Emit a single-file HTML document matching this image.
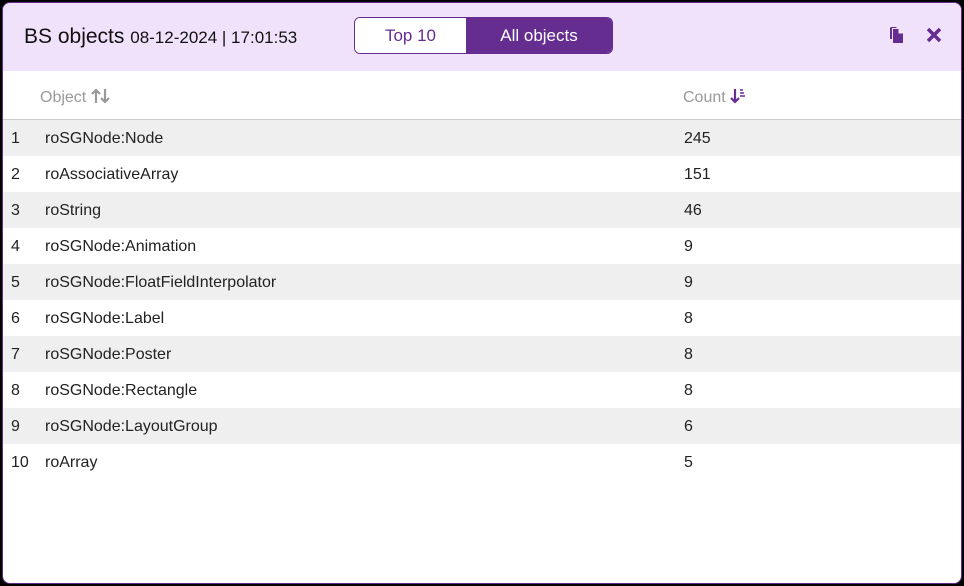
<!DOCTYPE html>
<html><head><meta charset="utf-8"><style>
*{margin:0;padding:0;box-sizing:border-box}
body{width:964px;height:586px;background:#000;font-family:"Liberation Sans",sans-serif;overflow:hidden;position:relative}
.modal{position:absolute;left:2px;top:2px;width:960px;height:582px;background:#fff;border-radius:8px;border:1px solid #662d91;overflow:hidden}
.hdr{position:absolute;left:0;top:0;width:100%;height:68px;background:#f1e2fb}
.title{position:absolute;left:21px;top:22px;font-size:21px;color:#111}
.title small{font-size:17px}
.tog{position:absolute;left:351px;top:14px;width:259px;height:37px;border:1.5px solid #662d91;border-radius:6px;overflow:hidden;display:flex;font-size:17px}
.tog div{display:flex;align-items:center;justify-content:center}
.t1{width:111px;background:#fff;color:#662d91}
.t2{flex:1;background:#662d91;color:#fff}
.th{position:absolute;top:85px;font-size:16px;color:#999}
.line{position:absolute;left:0;top:116px;width:100%;height:1px;background:#ccc}
.row{position:absolute;left:0;width:100%;height:36px;font-size:16px;color:#222;line-height:38px}
.row.g{background:#efefef}
.row span{position:absolute}
</style></head><body>
<div class="modal">
<div class="hdr">
<div class="title">BS objects <small>08-12-2024 | 17:01:53</small></div>
<div class="tog"><div class="t1">Top 10</div><div class="t2">All objects</div></div>
<svg style="position:absolute;left:884px;top:22px" width="18" height="20" viewBox="0 0 18 20"><path d="M4 2h6l-1 1H5v11H3V3z" fill="#662d91"/><path d="M6 4h6l4 4v10H6z" fill="#662d91"/><path d="M12 4v4h4" fill="#fff" stroke="#f1e2fb" stroke-width="1"/></svg>
<svg style="position:absolute;left:922px;top:23px" width="18" height="18" viewBox="0 0 18 18"><path d="M3 3L15 15M15 3L3 15" stroke="#662d91" stroke-width="3.5"/></svg>
</div>
<div class="th" style="left:37px">Object <svg width="20" height="16" viewBox="0 0 20 16" style="vertical-align:-2px"><path d="M5 15V2M1 6l4-4 4 4M14 1v13M10 10l4 4 4-4" stroke="#999" stroke-width="2.2" fill="none"/></svg></div>
<div class="th" style="left:680px">Count <svg width="16" height="16" viewBox="0 0 16 16" style="vertical-align:-2px"><path d="M5 1v13M1 10l4 4 4-4" stroke="#662d91" stroke-width="2.2" fill="none"/><path d="M10 2h3M10 5h4M10 8h5" stroke="#662d91" stroke-width="1.5"/></svg></div>
<div class="line"></div>
<div class="row g" style="top:117px"><span style="left:8px">1</span><span style="left:42px">roSGNode:Node</span><span style="left:681px">245</span></div>
<div class="row" style="top:153px"><span style="left:8px">2</span><span style="left:42px">roAssociativeArray</span><span style="left:681px">151</span></div>
<div class="row g" style="top:189px"><span style="left:8px">3</span><span style="left:42px">roString</span><span style="left:681px">46</span></div>
<div class="row" style="top:225px"><span style="left:8px">4</span><span style="left:42px">roSGNode:Animation</span><span style="left:681px">9</span></div>
<div class="row g" style="top:261px"><span style="left:8px">5</span><span style="left:42px">roSGNode:FloatFieldInterpolator</span><span style="left:681px">9</span></div>
<div class="row" style="top:297px"><span style="left:8px">6</span><span style="left:42px">roSGNode:Label</span><span style="left:681px">8</span></div>
<div class="row g" style="top:333px"><span style="left:8px">7</span><span style="left:42px">roSGNode:Poster</span><span style="left:681px">8</span></div>
<div class="row" style="top:369px"><span style="left:8px">8</span><span style="left:42px">roSGNode:Rectangle</span><span style="left:681px">8</span></div>
<div class="row g" style="top:405px"><span style="left:8px">9</span><span style="left:42px">roSGNode:LayoutGroup</span><span style="left:681px">6</span></div>
<div class="row" style="top:441px"><span style="left:8px">10</span><span style="left:42px">roArray</span><span style="left:681px">5</span></div>
</div>
</body></html>
